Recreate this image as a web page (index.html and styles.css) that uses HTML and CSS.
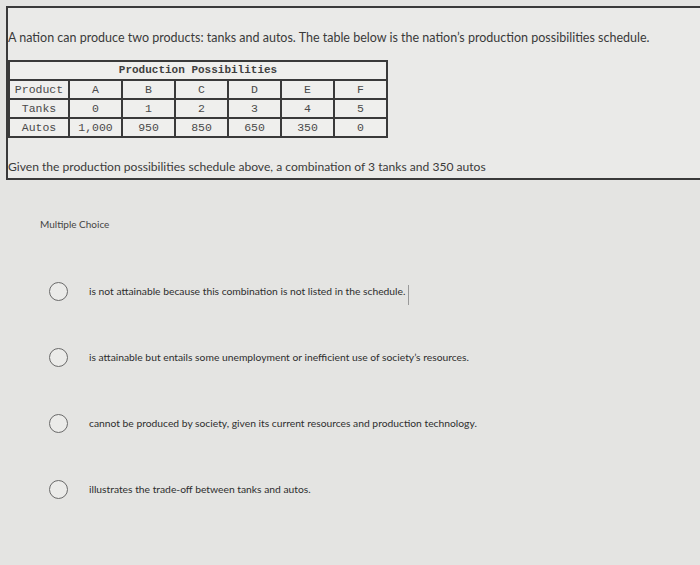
FILE: index.html
```html
<!DOCTYPE html>
<html lang="en">
<head>
<meta charset="utf-8">
<title>Production Possibilities</title>
<link rel="stylesheet" href="styles.css">
</head>
<body>
<div class="page">
  <section class="question">
    <p class="intro">A nation can produce two products: tanks and autos. The table below is the nation’s production possibilities schedule.</p>
    <table class="pp">
      <tr><th class="caption" colspan="7">Production Possibilities</th></tr>
      <tr><td class="first">Product</td><td>A</td><td>B</td><td>C</td><td>D</td><td>E</td><td>F</td></tr>
      <tr><td class="first">Tanks</td><td>0</td><td>1</td><td>2</td><td>3</td><td>4</td><td>5</td></tr>
      <tr><td class="first">Autos</td><td>1,000</td><td>950</td><td>850</td><td>650</td><td>350</td><td>0</td></tr>
    </table>
    <p class="prompt">Given the production possibilities schedule above, a combination of 3 tanks and 350 autos</p>
  </section>
  <section class="choices">
    <div class="label">Multiple Choice</div>
    <ul class="options">
      <li class="option"><span class="radio"></span><span class="text">is not attainable because this combination is not listed in the schedule.</span><span class="caret"></span></li>
      <li class="option"><span class="radio"></span><span class="text">is attainable but entails some unemployment or inefficient use of society’s resources.</span></li>
      <li class="option"><span class="radio"></span><span class="text">cannot be produced by society, given its current resources and production technology.</span></li>
      <li class="option"><span class="radio"></span><span class="text">illustrates the trade-off between tanks and autos.</span></li>
    </ul>
  </section>
</div>
</body>
</html>
```
FILE: styles.css
```css
html, body {
  margin: 0;
  padding: 0;
}
body {
  background: #e4e4e2;
  font-family: Lato, "Liberation Sans", sans-serif;
  color: #333;
  width: 700px;
  height: 565px;
  overflow: hidden;
}
.page {
  padding-top: 6px;
}
.question {
  margin-left: 6px;
  margin-right: -20px;
  border-top: 2px solid #3a3a3a;
  border-left: 2px solid #3a3a3a;
  border-bottom: 2px solid #3a3a3a;
  background: #eaeae8;
  padding: 0 0 3px 0;
}
.intro {
  margin: 0;
  padding: 22px 0 0 0;
  font-size: 12.5px;
  line-height: 16px;
  height: 30px;
  color: #3a3a3a;
}
.pp {
  border-collapse: collapse;
  font-family: "Liberation Mono", "DejaVu Sans Mono", monospace;
  font-size: 11.5px;
  color: #4a4a4a;
  margin: 0;
}
.pp th, .pp td {
  border: 2px solid #3a3a3a;
  text-align: center;
  padding: 0;
  height: 17px;
  line-height: 17px;
  width: 51px;
  background: #efefed;
}
.pp td.first {
  width: 58px;
}
.pp th.caption {
  font-weight: bold;
  font-size: 11px;
  color: #3f3f3f;
}
.prompt {
  margin: 0;
  padding: 21px 0 0 0;
  font-size: 12.1px;
  line-height: 16px;
  color: #3a3a3a;
}
.choices {
  padding: 38px 0 0 40px;
}
.label {
  font-size: 10px;
  line-height: 12px;
  color: #444;
}
.options {
  list-style: none;
  margin: 28px 0 0 0;
  padding: 0;
}
.option {
  display: flex;
  align-items: center;
  height: 66px;
}
.radio {
  box-sizing: border-box;
  width: 19px;
  height: 19px;
  border: 1.6px solid #6a6a6a;
  border-radius: 50%;
  margin-left: 9px;
  flex: none;
  background: #ebebe9;
}
.text {
  margin-left: 21px;
  font-size: 10.3px;
  color: #2e2e2e;
}
.caret {
  width: 1px;
  height: 20px;
  background: #999;
  margin-left: 3px;
  margin-top: 8px;
}
```
